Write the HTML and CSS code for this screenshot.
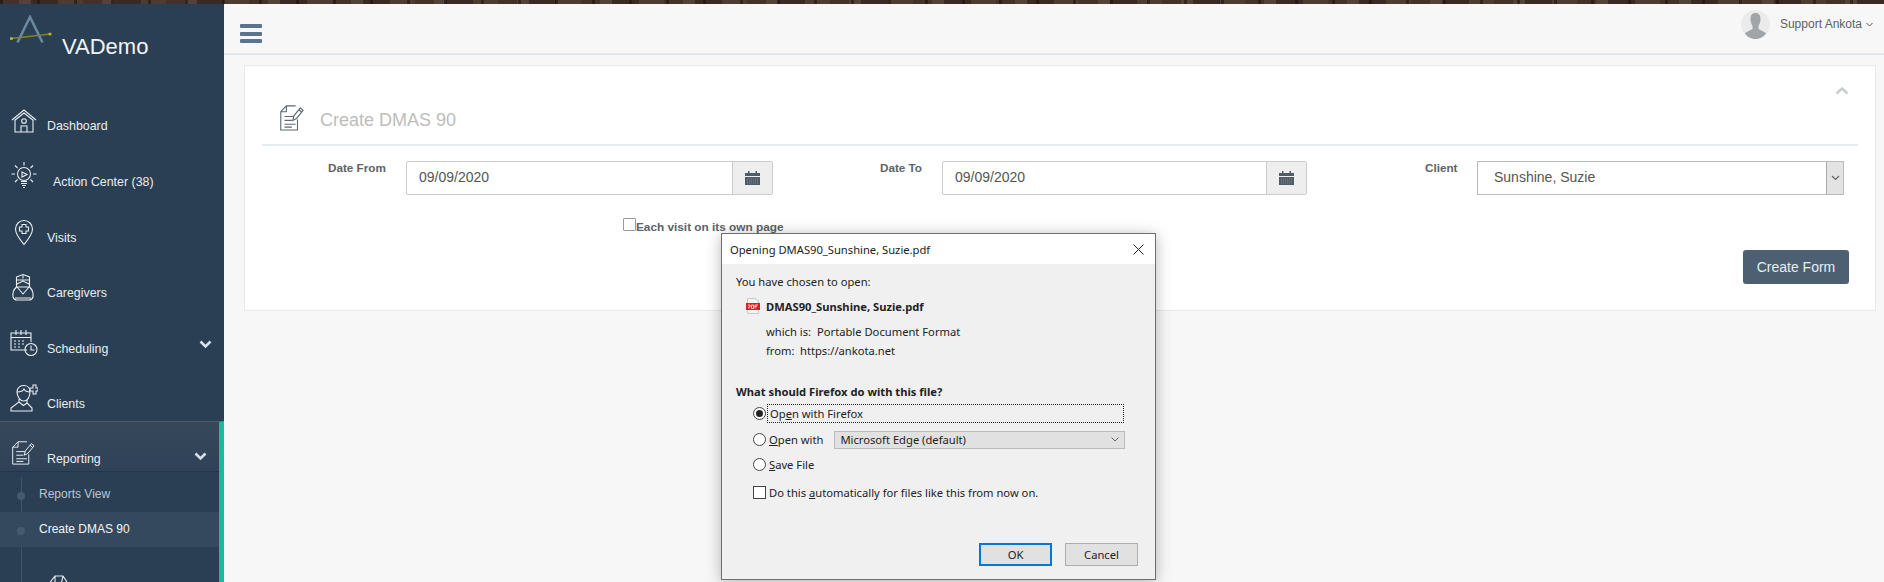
FILE: index.html
```html
<!DOCTYPE html>
<html lang="en">
<head>
    <meta charset="UTF-8">
    <title>Create DMAS 90</title>
    <link rel="stylesheet" href="styles.css">
</head>
<body>
    <div class="wood-strip"></div>
    <div class="page">
        <!-- Sidebar -->
        <aside class="sidebar">
            <div class="brand">
                <svg class="brand-logo" width="42" height="30" viewBox="0 0 42 30">
                    <path d="M7.5 27.5 20 2 32.5 27.5" fill="none" stroke="#6a889f" stroke-width="2.6"/>
                    <path d="M1.5 23.5 40.5 19" stroke="#85851f" stroke-width="1.3"/>
                    <circle cx="1.5" cy="23.5" r="1.6" fill="#b5b520"/>
                    <circle cx="40" cy="19" r="1.6" fill="#b5b520"/>
                </svg>
                <span class="brand-name">VADemo</span>
            </div>
            <nav class="nav">
                <a class="nav-item">
                    <svg class="nav-icon" viewBox="0 0 28 28">
                        <path d="M2 14 14 4 26 14M4.500 14.500 14 7 23.500 14.500M5 13.500V26H23V13.500M11 26V20H17V26M11 20H17"/>
                        <circle cx="14" cy="15" r="2.300"/>
                    </svg>
                    <span class="nav-label">Dashboard</span>
                </a>
                <a class="nav-item">
                    <svg class="nav-icon" viewBox="0 0 28 28">
                        <circle cx="14" cy="12" r="6.500"/>
                        <path d="M12 10 17 12.500 12 15ZM11 19.500H17M11 21.500H17M12 23.500H16M13 25.500H15M14 0V3.500M1.500 12H5M23 12H26.500M5 3.500 7.500 6M23 3.500 20.500 6M5 20 7.500 17.500M23 20 20.500 17.500"/>
                    </svg>
                    <span class="nav-label nav-label-shift">Action Center (38)</span>
                </a>
                <a class="nav-item">
                    <svg class="nav-icon" viewBox="0 0 28 28">
                        <path d="M14 26.500C10 21.500 5.500 16.500 5.500 11A8.500 8.500 0 0 1 22.500 11C22.500 16.500 18 21.500 14 26.500Z"/>
                        <path d="M12 6.500H16V9H18.500V13H16V15.500H12V13H9.500V9H12Z"/>
                    </svg>
                    <span class="nav-label">Visits</span>
                </a>
                <a class="nav-item">
                    <svg class="nav-icon" viewBox="0 0 28 28">
                        <path d="M6.500 4 13 1.500 19.500 4V14H6.500ZM6.500 7H19.500M13 2.500V5.500M7 11 13 8 19 11M7 14 13 21 19 14M6.500 14C3 17 2.500 20 3 24 4 27 6 27 7 27H19C20 27 22 27 23 24 23.500 20 23 17 19.500 14M5 25H21"/>
                    </svg>
                    <span class="nav-label">Caregivers</span>
                </a>
                <a class="nav-item">
                    <svg class="nav-icon" viewBox="0 0 28 28">
                        <path d="M17 21H1V4H21V13M1 8.500H21M6 1V6M11 1V6M16 1V6M4 12H6M8 12H10M12 12H14M4 15H6M8 15H10M12 15H14M4 18H6M8 18H10"/>
                        <circle cx="21" cy="20.500" r="6"/>
                        <path d="M21 16.500V21H24.500"/>
                    </svg>
                    <span class="nav-label">Scheduling</span>
                    <svg class="nav-chevron" width="13" height="9" viewBox="0 0 13 9"><path d="M1.500 1.500 6.500 6.500 11.500 1.500"/></svg>
                </a>
                <a class="nav-item">
                    <svg class="nav-icon" viewBox="0 0 28 28">
                        <path d="M7 8C7 3 11 1.500 14 1.500 17 1.500 20 3.500 20 8 20 12 18 17 13.500 17 10 17 7 12 7 8ZM7 8C10 8 13 7 14 5 15 7 17 8 20 8M9 15V18L1 24V27H22V24L17 19V15M9 18 13.500 21.500 17 19"/>
                        <path d="M23 1V4H20V7H23V10H26V7H28V4H26V1Z"/>
                    </svg>
                    <span class="nav-label">Clients</span>
                </a>
            </nav>
            <section class="nav-section">
                <a class="nav-item nav-item-open">
                    <svg class="nav-icon" viewBox="0 0 28 28">
                        <path d="M21 16V27H3V8L9 2H19M3 8H9V2M7 13H17M7 17H15M7 21H19M7 24H15"/>
                        <path d="M16 17 17 12.500 24 4 27 6.500 20 15ZM22.500 6 25.500 8.500"/>
                    </svg>
                    <span class="nav-label">Reporting</span>
                    <svg class="nav-chevron" width="13" height="9" viewBox="0 0 13 9"><path d="M1.500 1.500 6.500 6.500 11.500 1.500"/></svg>
                </a>
                <ul class="sub-nav">
                    <li class="sub-item">Reports View</li>
                    <li class="sub-item sub-item-active">Create DMAS 90</li>
                    <li class="sub-item">
                        <svg class="sub-icon" width="26" height="20" viewBox="0 0 26 20">
                            <path d="M1 10 8 1H16L22 10M8 1V10M16 1 14 10M1 10H22V20H1Z"/>
                        </svg>
                    </li>
                </ul>
            </section>
        </aside>

        <!-- Main area -->
        <div class="main">
            <header class="topbar">
                <div class="hamburger"><span></span><span></span><span></span></div>
                <div class="user">
                    <svg class="avatar" width="29" height="29" viewBox="0 0 29 29">
                        <circle cx="14.500" cy="14.500" r="14.500" fill="#ebebeb"/>
                        <path d="M14.500 3C11 3 9.500 5.500 9.500 9 9.500 12 10.500 14 11.500 16V19L4 23C5.500 26.500 10 29 14.500 29 19 29 23.500 26.500 25 23L17.500 19V16C18.500 14 19.500 12 19.500 9 19.500 5.500 18 3 14.500 3Z" fill="#a1a5a8"/>
                    </svg>
                    <span class="user-name">Support Ankota</span>
                    <svg class="user-caret" width="7" height="5" viewBox="0 0 7 5"><path d="M.5 1 3.500 4 6.500 1" fill="none" stroke="#555" stroke-width="1"/></svg>
                </div>
            </header>

            <div class="content">
                <div class="panel">
                    <div class="panel-title">
                        <svg class="panel-icon" width="26" height="27" viewBox="0 0 28 28" preserveAspectRatio="none">
                            <path d="M21 16V27H3V8L9 2H19M3 8H9V2M7 13H17M7 17H15M7 21H19M7 24H15"/>
                            <path d="M16 17 17 12.500 24 4 27 6.500 20 15ZM22.500 6 25.500 8.500"/>
                        </svg>
                        <h2>Create DMAS 90</h2>
                        <svg class="panel-collapse" width="14" height="9" viewBox="0 0 14 9"><path d="M1.500 7.500 7 2.500 12.500 7.500"/></svg>
                    </div>
                    <div class="form-row">
                        <div class="field field-from">
                            <label>Date From</label>
                            <div class="date-input">
                                <span class="date-value">09/09/2020</span>
                                <span class="date-addon">
                                    <svg width="15" height="14" viewBox="0 0 15 14"><path d="M0 2H3V0H4.500V2H10.500V0H12V2H15V5H0ZM0 6H15V14H0Z" fill="#4f5b66"/><path d="M2 8H13M2 10H13M2 12H13" stroke="#aab" stroke-width=".6" stroke-dasharray="1 1"/></svg>
                                </span>
                            </div>
                        </div>
                        <div class="field field-to">
                            <label>Date To</label>
                            <div class="date-input">
                                <span class="date-value">09/09/2020</span>
                                <span class="date-addon">
                                    <svg width="15" height="14" viewBox="0 0 15 14"><path d="M0 2H3V0H4.500V2H10.500V0H12V2H15V5H0ZM0 6H15V14H0Z" fill="#4f5b66"/><path d="M2 8H13M2 10H13M2 12H13" stroke="#aab" stroke-width=".6" stroke-dasharray="1 1"/></svg>
                                </span>
                            </div>
                        </div>
                        <div class="field field-client">
                            <label>Client</label>
                            <div class="client-select">
                                <span class="client-value">Sunshine, Suzie</span>
                                <span class="client-arrow">
                                    <svg width="9" height="6" viewBox="0 0 9 6"><path d="M1 1 4.500 4.500 8 1" fill="none" stroke="#666" stroke-width="1.200"/></svg>
                                </span>
                            </div>
                        </div>
                    </div>
                    <div class="check-row">
                        <span class="web-check"></span>
                        <span class="check-label">Each visit on its own page</span>
                    </div>
                    <div class="action-row">
                        <button class="btn-create">Create Form</button>
                    </div>
                </div>
            </div>
        </div>
    </div>

    <!-- Firefox download dialog -->
    <div class="dialog">
        <div class="dialog-title">
            <span>Opening DMAS90_Sunshine, Suzie.pdf</span>
            <svg width="11" height="11" viewBox="0 0 11 11"><path d="M.5 .5 10.500 10.500M10.500 .5 .5 10.500" stroke="#222" stroke-width="1"/></svg>
        </div>
        <div class="dialog-body">
            <p class="chosen">You have chosen to open:</p>
            <div class="file-row">
                <svg class="pdf-icon" width="14" height="16" viewBox="0 0 14 16">
                    <path d="M1.500 .5H10L12.500 3V15.500H1.500Z" fill="#f4f4f4" stroke="#c9c9c9"/>
                    <rect x="0" y="5" width="14" height="7" fill="#e02020"/>
                    <path d="M2 7H4V9H2.800V10.500M5.500 7V10.500H7.500V7ZM9 10.500V7H12M9 8.700H11" fill="none" stroke="#fff" stroke-width=".8"/>
                </svg>
                <strong>DMAS90_Sunshine, Suzie.pdf</strong>
            </div>
            <div class="file-meta file-type"><span class="meta-key">which is:</span><span>Portable Document Format</span></div>
            <div class="file-meta file-from"><span class="meta-key">from:</span><span>https://ankota.net</span></div>
            <p class="question">What should Firefox do with this file?</p>
            <div class="option option-first">
                <span class="radio radio-on"></span>
                <span class="focus-box">Op<u>e</u>n with Firefox</span>
            </div>
            <div class="option option-with">
                <span class="radio"></span>
                <span class="option-text"><u>O</u>pen with</span>
                <span class="app-select">
                    <span>Microsoft Edge (default)</span>
                    <svg width="8" height="5" viewBox="0 0 8 5"><path d="M.5 .5 4 4 7.500 .5" fill="none" stroke="#666" stroke-width="1"/></svg>
                </span>
            </div>
            <div class="option option-save">
                <span class="radio"></span>
                <span class="option-text"><u>S</u>ave File</span>
            </div>
            <div class="option option-auto">
                <span class="box-check"></span>
                <span class="option-text">Do this <u>a</u>utomatically for files like this from now on.</span>
            </div>
            <div class="dialog-buttons">
                <button class="win-btn win-btn-default">OK</button>
                <button class="win-btn">Cancel</button>
            </div>
        </div>
    </div>
</body>
</html>
```

FILE: styles.css
```css
* {
    margin: 0;
    padding: 0;
    box-sizing: border-box;
}

html, body {
    height: 582px;
    overflow: hidden;
}

body {
    font-family: "Liberation Sans", Arial, sans-serif;
    background: #f7f7f7;
    color: #555;
    position: relative;
}

.wood-strip {
    height: 4px;
    background:
        repeating-linear-gradient(90deg, rgba(20,12,8,0.5) 0 3px, transparent 3px 37px),
        repeating-linear-gradient(90deg, #44322a 0 19px, #54413a 19px 31px, #3a2a24 31px 58px, #4e3b32 58px 83px);
}

.page {
    display: flex;
    height: 578px;
}

/* Sidebar */
.sidebar {
    width: 224px;
    flex-shrink: 0;
    background: #2b3f54;
    color: #e7edf1;
    overflow: hidden;
}

.brand {
    height: 83.4px;
    display: flex;
    align-items: flex-start;
    padding: 11px 0 0 10px;
}

.brand-name {
    font-size: 22px;
    color: #f0f5f8;
    margin: 19px 0 0 10px;
}

.nav-item {
    height: 55.6px;
    display: flex;
    align-items: flex-start;
    padding: 19px 0 0 10px;
    position: relative;
}

.nav-icon {
    width: 28px;
    height: 28px;
    flex-shrink: 0;
    fill: none;
    stroke: #e8eef2;
    stroke-width: 1.1;
}

.nav-label {
    font-size: 12.4px;
    line-height: 20px;
    margin: 10px 0 0 9px;
}

.nav-label-shift {
    margin-left: 15px;
}

.nav-chevron {
    position: absolute;
    right: 12px;
    top: 30px;
    fill: none;
    stroke: #d5e0e8;
    stroke-width: 2.6;
}

.nav-section {
    border-top: 1px solid #4b5c6c;
    border-right: 5px solid #1abb9c;
    height: 161px;
}

.nav-item-open {
    height: 50px;
    padding-top: 18px;
    background: linear-gradient(#37485b, #2f4257);
    border-bottom: 1px solid #243546;
}

.nav-item-open .nav-icon {
    width: 25px;
    height: 25px;
}

.nav-item-open .nav-label {
    margin: 9px 0 0 12px;
}

.sub-nav {
    list-style: none;
    padding-top: 5px;
    position: relative;
}

.sub-nav::before {
    content: "";
    position: absolute;
    left: 21px;
    top: 5px;
    bottom: 0;
    width: 1px;
    background: #425568;
}

.sub-item {
    height: 35px;
    line-height: 35px;
    padding-left: 39px;
    font-size: 12px;
    color: #b9c6d1;
    position: relative;
}

.sub-item::before {
    content: "";
    position: absolute;
    left: 17px;
    top: 15px;
    width: 8px;
    height: 8px;
    border-radius: 50%;
    background: #465a6d;
}

.sub-item-active {
    background: #35495e;
    color: #f2f6f8;
}

.sub-icon {
    margin: 28px 0 0 8px;
    fill: none;
    stroke: #e8eef2;
    stroke-width: 1.1;
    display: block;
}

/* Top bar */
.main {
    flex: 1;
    min-width: 0;
}

.topbar {
    height: 51px;
    background: #f7f7f7;
    border-bottom: 2px solid #e2e7eb;
    border-top-left-radius: 4px;
    display: flex;
    align-items: flex-start;
    justify-content: space-between;
    padding: 6px 11px 0 16px;
}

.hamburger {
    width: 22px;
    margin-top: 14px;
    display: flex;
    flex-direction: column;
    gap: 3.5px;
}

.hamburger span {
    height: 4px;
    border-radius: 1px;
    background: #5a738e;
}

.user {
    display: flex;
    align-items: flex-start;
}

.user-name {
    font-size: 12px;
    line-height: 14px;
    margin: 7px 0 0 10px;
    color: #5b5f63;
}

.user-caret {
    margin: 12px 0 0 4px;
}

/* Panel */
.content {
    padding: 10px 8px 0 20px;
}

.panel {
    height: 246px;
    background: #fff;
    border: 1px solid #e6e9ed;
    padding: 0 17px;
}

.panel-title {
    height: 80px;
    border-bottom: 2px solid #e6e9ed;
    display: flex;
    align-items: flex-start;
    position: relative;
    padding: 38px 0 0 16px;
}

.panel-icon {
    fill: none;
    stroke: #5f6770;
    stroke-width: 1.2;
}

.panel-title h2 {
    font-size: 18px;
    font-weight: 400;
    color: #bdbdbd;
    margin: 6px 0 0 16px;
}

.panel-collapse {
    position: absolute;
    right: 9px;
    top: 20px;
    fill: none;
    stroke: #c9ced3;
    stroke-width: 2.6;
}

.form-row {
    display: flex;
    margin-top: 15px;
}

.field {
    display: flex;
}

.field label {
    font-size: 11.7px;
    font-weight: 700;
    color: #5c6369;
    line-height: 14px;
}

.field-from {
    margin-left: 66px;
}

.field-from label {
    width: 78px;
}

.field-to {
    margin-left: 107px;
}

.field-to label {
    width: 62px;
}

.field-client {
    margin-left: 118px;
}

.field-client label {
    width: 52px;
}

.date-input {
    height: 34px;
    border: 1px solid #ccc;
    border-radius: 2px;
    display: flex;
}

.field-from .date-input {
    width: 367px;
}

.field-to .date-input {
    width: 365px;
}

.date-value, .client-value {
    flex: 1;
    font-size: 14px;
    line-height: 30px;
    padding-left: 12px;
    color: #555;
}

.date-addon {
    width: 40px;
    background: #eee;
    border-left: 1px solid #ccc;
    display: flex;
    align-items: center;
    justify-content: center;
}

.client-select {
    width: 367px;
    height: 34px;
    border: 1px solid #bbb;
    display: flex;
}

.client-value {
    padding-left: 16px;
}

.client-arrow {
    width: 17px;
    background: #e3e3e3;
    border-left: 1px solid #aaa;
    display: flex;
    align-items: center;
    justify-content: center;
}

.check-row {
    display: flex;
    margin: 23px 0 0 361px;
}

.web-check {
    width: 13px;
    height: 13px;
    border: 1px solid #9a9a9a;
    border-radius: 1px;
}

.check-label {
    font-size: 11.8px;
    font-weight: 700;
    color: #5c6369;
    line-height: 14px;
    margin-top: 2px;
}

.action-row {
    display: flex;
    justify-content: flex-end;
    padding-right: 9px;
    margin-top: 16px;
}

.btn-create {
    width: 106px;
    height: 34px;
    border: none;
    border-radius: 3px;
    background: #4d6072;
    color: #e6edf2;
    font-family: inherit;
    font-size: 14px;
}

/* Download dialog */
.dialog {
    position: absolute;
    left: 721px;
    top: 233px;
    width: 435px;
    height: 347px;
    border: 1px solid #6d6d6d;
    background: #f0f0f0;
    box-shadow: 0 2px 14px rgba(0,0,0,0.28);
    font-family: "Noto Sans", sans-serif;
    font-size: 11.2px;
    color: #222;
}

.dialog-title {
    height: 30px;
    background: #fff;
    display: flex;
    align-items: center;
    justify-content: space-between;
    padding: 0 11px 0 8px;
}

.dialog-body {
    padding: 9px 0 0 14px;
    position: relative;
    height: 315px;
}

.chosen {
    line-height: 18px;
}

.file-row {
    display: flex;
    align-items: center;
    margin: 6px 0 0 10px;
    height: 18px;
}

.pdf-icon {
    margin-right: 6px;
}

.file-meta {
    margin-left: 30px;
    line-height: 18px;
    display: flex;
}

.file-type {
    margin-top: 8px;
}

.file-from {
    margin-top: 1px;
}

.file-type .meta-key {
    width: 51px;
}

.file-from .meta-key {
    width: 34px;
}

.question {
    font-weight: 700;
    line-height: 18px;
    margin-top: 23px;
}

.option {
    display: flex;
    align-items: center;
    height: 19px;
    margin-left: 17px;
}

.option-first {
    margin-top: 3px;
}

.option-with {
    margin-top: 7px;
}

.option-save {
    margin-top: 6px;
}

.option-auto {
    margin-top: 9px;
}

.radio {
    width: 13px;
    height: 13px;
    border: 1px solid #444;
    border-radius: 50%;
    background: #fff;
    flex-shrink: 0;
    position: relative;
}

.radio-on::after {
    content: "";
    position: absolute;
    left: 2px;
    top: 2px;
    width: 7px;
    height: 7px;
    border-radius: 50%;
    background: #222;
}

.box-check {
    width: 13px;
    height: 13px;
    border: 1px solid #444;
    background: #fff;
    flex-shrink: 0;
}

.focus-box {
    width: 357px;
    height: 19px;
    line-height: 17px;
    padding-left: 2px;
    margin-left: 1px;
    border: 1px dotted #222;
}

.option-text {
    margin-left: 3px;
}

.app-select {
    width: 291px;
    height: 18px;
    margin-left: 11px;
    background: #e1e1e1;
    border: 1px solid #bbb;
    display: flex;
    align-items: center;
    justify-content: space-between;
    padding: 0 5px;
}

.dialog-buttons {
    position: absolute;
    right: 17px;
    top: 279px;
    display: flex;
    gap: 13px;
}

.win-btn {
    width: 73px;
    height: 23px;
    background: #e1e1e1;
    border: 1px solid #adadad;
    font-family: inherit;
    font-size: 11.2px;
    color: #222;
}

.win-btn-default {
    border: 2px solid #0078d7;
}
```
